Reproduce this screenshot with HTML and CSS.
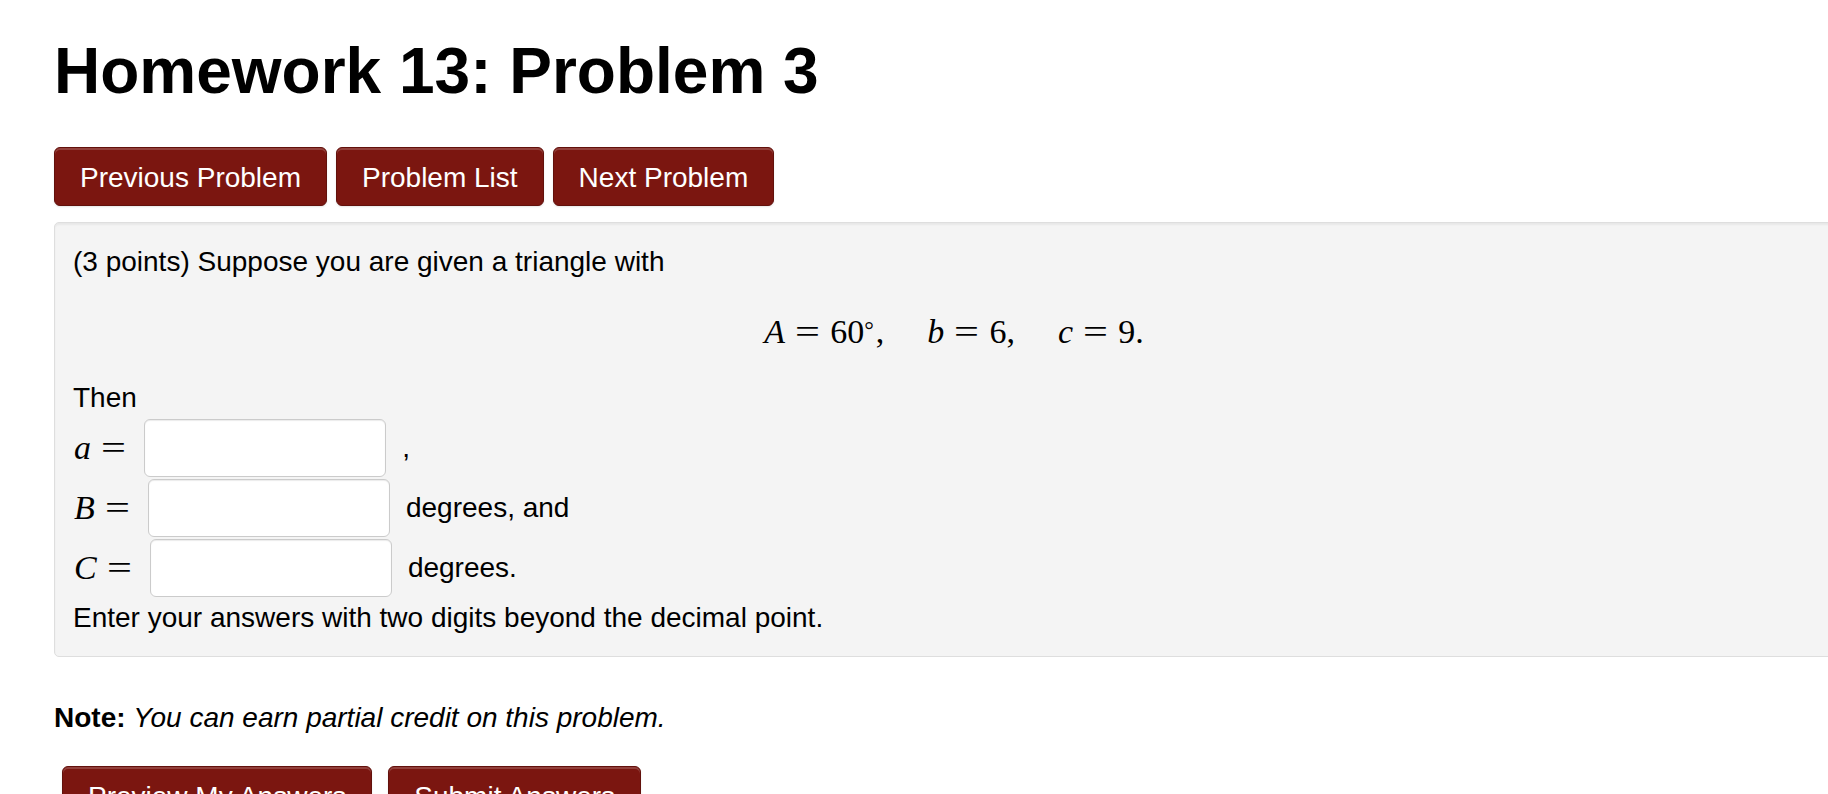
FILE: index.html
```html
<!DOCTYPE html>
<html lang="en">
<head>
    <meta charset="UTF-8">
    <meta name="viewport" content="width=device-width, initial-scale=1.0">
    <title>Homework 13: Problem 3</title>
    <link rel="stylesheet" href="styles.css">
</head>
<body>
    <div class="page">
        <h1>Homework 13: Problem 3</h1>

        <div class="nav-buttons">
            <button class="btn">Previous Problem</button>
            <button class="btn">Problem List</button>
            <button class="btn">Next Problem</button>
        </div>

        <div class="problem">
            <p class="line">(3 points) Suppose you are given a triangle with</p>

            <div class="display-math">
                <span class="mi">A</span><span class="mo">=</span><span class="mn">60</span><span class="deg">°</span><span class="punct">,</span><span class="quad"></span><span class="mi">b</span><span class="mo">=</span><span class="mn">6</span><span class="punct">,</span><span class="quad"></span><span class="mi">c</span><span class="mo">=</span><span class="mn">9</span><span class="punct">.</span>
            </div>

            <p class="line">Then</p>

            <div class="answer-row">
                <span class="math-label"><span class="mi">a</span><span class="mo">=</span></span>
                <input type="text" class="answer" id="answer-a">
                <span>,</span>
            </div>
            <div class="answer-row">
                <span class="math-label"><span class="mi">B</span><span class="mo">=</span></span>
                <input type="text" class="answer" id="answer-b">
                <span>degrees, and</span>
            </div>
            <div class="answer-row">
                <span class="math-label"><span class="mi">C</span><span class="mo">=</span></span>
                <input type="text" class="answer" id="answer-c">
                <span>degrees.</span>
            </div>

            <p class="line">Enter your answers with two digits beyond the decimal point.</p>
        </div>

        <p class="note"><b>Note:</b> <i>You can earn partial credit on this problem.</i></p>

        <div class="submit-buttons">
            <button class="btn">Preview My Answers</button>
            <button class="btn">Submit Answers</button>
        </div>
    </div>
</body>
</html>
```

FILE: styles.css
```css
html {
    overflow: hidden;
}

body {
    font-family: "Liberation Sans", Arial, Helvetica, sans-serif;
    font-size: 28px;
    line-height: 40px;
    color: #000;
    background-color: white;
    margin: 0;
}

.page {
    padding: 34px 0 0 54px;
    width: 1800px;
}

h1 {
    font-size: 64px;
    font-weight: bold;
    line-height: 74px;
    margin: 0 0 39px;
}

/* dark red buttons */
.nav-buttons, .submit-buttons {
    display: flex;
    gap: 9px;
}

.nav-buttons {
    margin-bottom: 16px;
}

.submit-buttons {
    margin-left: 8px;
    gap: 16px;
}

.btn {
    font-family: inherit;
    font-size: 28px;
    line-height: 33px;
    padding: 13px 25px 11px;
    color: white;
    background-color: #7b1610;
    border: 1px solid #62110c;
    border-radius: 6px;
    box-shadow: inset 0 2px 0 rgba(255, 255, 255, 0.18), 0 1px 2px rgba(0, 0, 0, 0.1);
    cursor: pointer;
}

.btn:hover {
    background-color: #6a120d;
}

.problem {
    background-color: #f4f4f4;
    border: 1px solid #dedede;
    border-radius: 5px;
    box-shadow: inset 0 2px 2px rgba(0, 0, 0, 0.05);
    padding: 19px 18px 18px;
    box-sizing: border-box;
}

.line {
    margin: 0;
}

/* math typesetting */
.display-math {
    text-align: center;
    font-family: "Liberation Serif", "Times New Roman", serif;
    font-size: 34px;
    line-height: 96px;
    height: 96px;
}

.mi {
    font-family: "Liberation Serif", "Times New Roman", serif;
    font-style: italic;
    font-size: 34px;
}

.mo {
    display: inline-block;
    font-family: "Liberation Serif", "Times New Roman", serif;
    font-size: 34px;
    margin: 0 13px;
    transform: scaleX(1.3);
}

.deg {
    font-size: 24px;
    vertical-align: 5px;
    margin-right: 2px;
}

.quad {
    display: inline-block;
    width: 43px;
}

.answer-row {
    display: flex;
    align-items: center;
    height: 60px;
}

.math-label {
    display: inline-flex;
    align-items: baseline;
    margin-left: 1px;
}

.math-label .mo {
    margin-right: 0;
}

.answer {
    width: 242px;
    height: 58px;
    box-sizing: border-box;
    margin: 0 16px 0 21px;
    border: 1px solid #cbcbcb;
    border-radius: 6px;
    background-color: white;
    box-shadow: inset 0 1px 1px rgba(0, 0, 0, 0.08);
    font-size: 28px;
    padding: 4px 10px;
}

.note {
    margin: 41px 0 28px;
}
```
